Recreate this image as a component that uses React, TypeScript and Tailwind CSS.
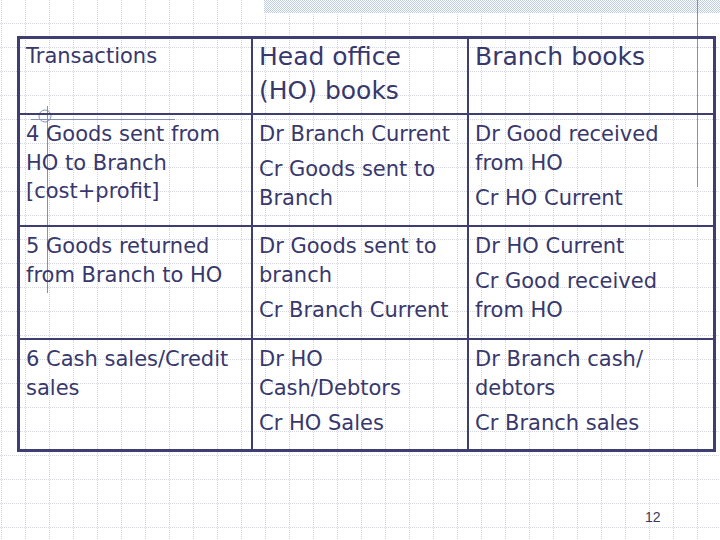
import React from "react";

const font = { fontFamily: '"DejaVu Sans", Verdana, sans-serif' };

function Para({ lines, first }: { lines: string[]; first?: boolean }) {
  return (
    <div className={first ? "" : "mt-[6.5px]"}>
      {lines.map((l, i) => (
        <div key={i} className="whitespace-nowrap">
          {l}
        </div>
      ))}
    </div>
  );
}

function Cell({
  paras,
  last,
  bottom,
  header,
  big,
}: {
  paras: string[][];
  last?: boolean;
  bottom?: boolean;
  header?: boolean;
  big?: boolean;
}) {
  const cls = [
    "pl-[6px]",
    header ? (big ? "pt-[1px]" : "pt-[3px]") : "pt-[5px]",
    big ? "text-[25px] leading-[34px]" : "text-[21px] leading-[28.5px]",
    last ? "" : "border-r-2 border-[#3e3e72]",
    bottom ? "" : "border-b-2 border-[#3e3e72]",
  ].join(" ");
  return (
    <div className={cls}>
      {paras.map((p, i) => (
        <Para key={i} lines={p} first={i === 0} />
      ))}
    </div>
  );
}

export default function App() {
  const gridV: number[] = [];
  for (let x = 1; x < 720; x += 24) gridV.push(x + 0.5);
  const gridH: number[] = [];
  for (let y = 23; y < 540; y += 24) gridH.push(y + 0.5);

  return (
    <div className="relative w-[720px] h-[540px] overflow-hidden bg-white text-[#38386c]" style={font}>
      <svg className="absolute inset-0" width="720" height="540" viewBox="0 0 720 540">
        <defs>
          <pattern id="hatch" width="2" height="2" patternUnits="userSpaceOnUse">
            <rect width="2" height="2" fill="#ffffff" />
            <rect width="1" height="1" fill="#bccbe8" />
            <rect x="1" y="1" width="1" height="1" fill="#bccbe8" />
          </pattern>
        </defs>
        {gridV.map((x) => (
          <line key={"v" + x} x1={x} y1={0} x2={x} y2={540} stroke="#d3d5e0" strokeWidth="1" strokeDasharray="1 1" />
        ))}
        {gridH.map((y) => (
          <line key={"h" + y} x1={0} y1={y} x2={720} y2={y} stroke="#d3d5e0" strokeWidth="1" strokeDasharray="1 1" />
        ))}
        <rect x="264" y="0" width="456" height="13" fill="url(#hatch)" />
        <line x1="697.5" y1="0" x2="697.5" y2="187" stroke="#8590b8" strokeWidth="1" />
        <line x1="47.5" y1="106" x2="47.5" y2="293" stroke="#8590b8" strokeWidth="1" />
        <line x1="31" y1="119.5" x2="175" y2="119.5" stroke="#8590b8" strokeWidth="1" />
        <circle cx="45" cy="116" r="6" fill="none" stroke="#8590b8" strokeWidth="1" />
      </svg>

      <div className="relative flex flex-col pt-[36px] pl-[17px]">
        <div className="w-[699px] h-[416px] border-[3px] border-[#3e3e72] grid grid-cols-[233px_216px_1fr] grid-rows-[76px_112px_113px_1fr]">
          <Cell header paras={[["Transactions"]]} />
          <Cell header big paras={[["Head office", "(HO) books"]]} />
          <Cell header big last paras={[["Branch books"]]} />

          <Cell paras={[["4 Goods sent from", "HO to Branch", "[cost+profit]"]]} />
          <Cell paras={[["Dr Branch Current"], ["Cr Goods sent to", "Branch"]]} />
          <Cell last paras={[["Dr Good received", "from HO"], ["Cr HO Current"]]} />

          <Cell paras={[["5 Goods returned", "from Branch to HO"]]} />
          <Cell paras={[["Dr Goods sent to", "branch"], ["Cr Branch Current"]]} />
          <Cell last paras={[["Dr HO Current"], ["Cr Good received", "from HO"]]} />

          <Cell bottom paras={[["6 Cash sales/Credit", "sales"]]} />
          <Cell bottom paras={[["Dr HO", "Cash/Debtors"], ["Cr HO Sales"]]} />
          <Cell bottom last paras={[["Dr Branch cash/", "debtors"], ["Cr Branch sales"]]} />
        </div>
        <div
          className="ml-[628px] mt-[57px] text-[14px] leading-[16px] text-[#3a3a5e]"
          style={{ fontFamily: '"Liberation Sans", Arial, sans-serif' }}
        >
          12
        </div>
      </div>
    </div>
  );
}
